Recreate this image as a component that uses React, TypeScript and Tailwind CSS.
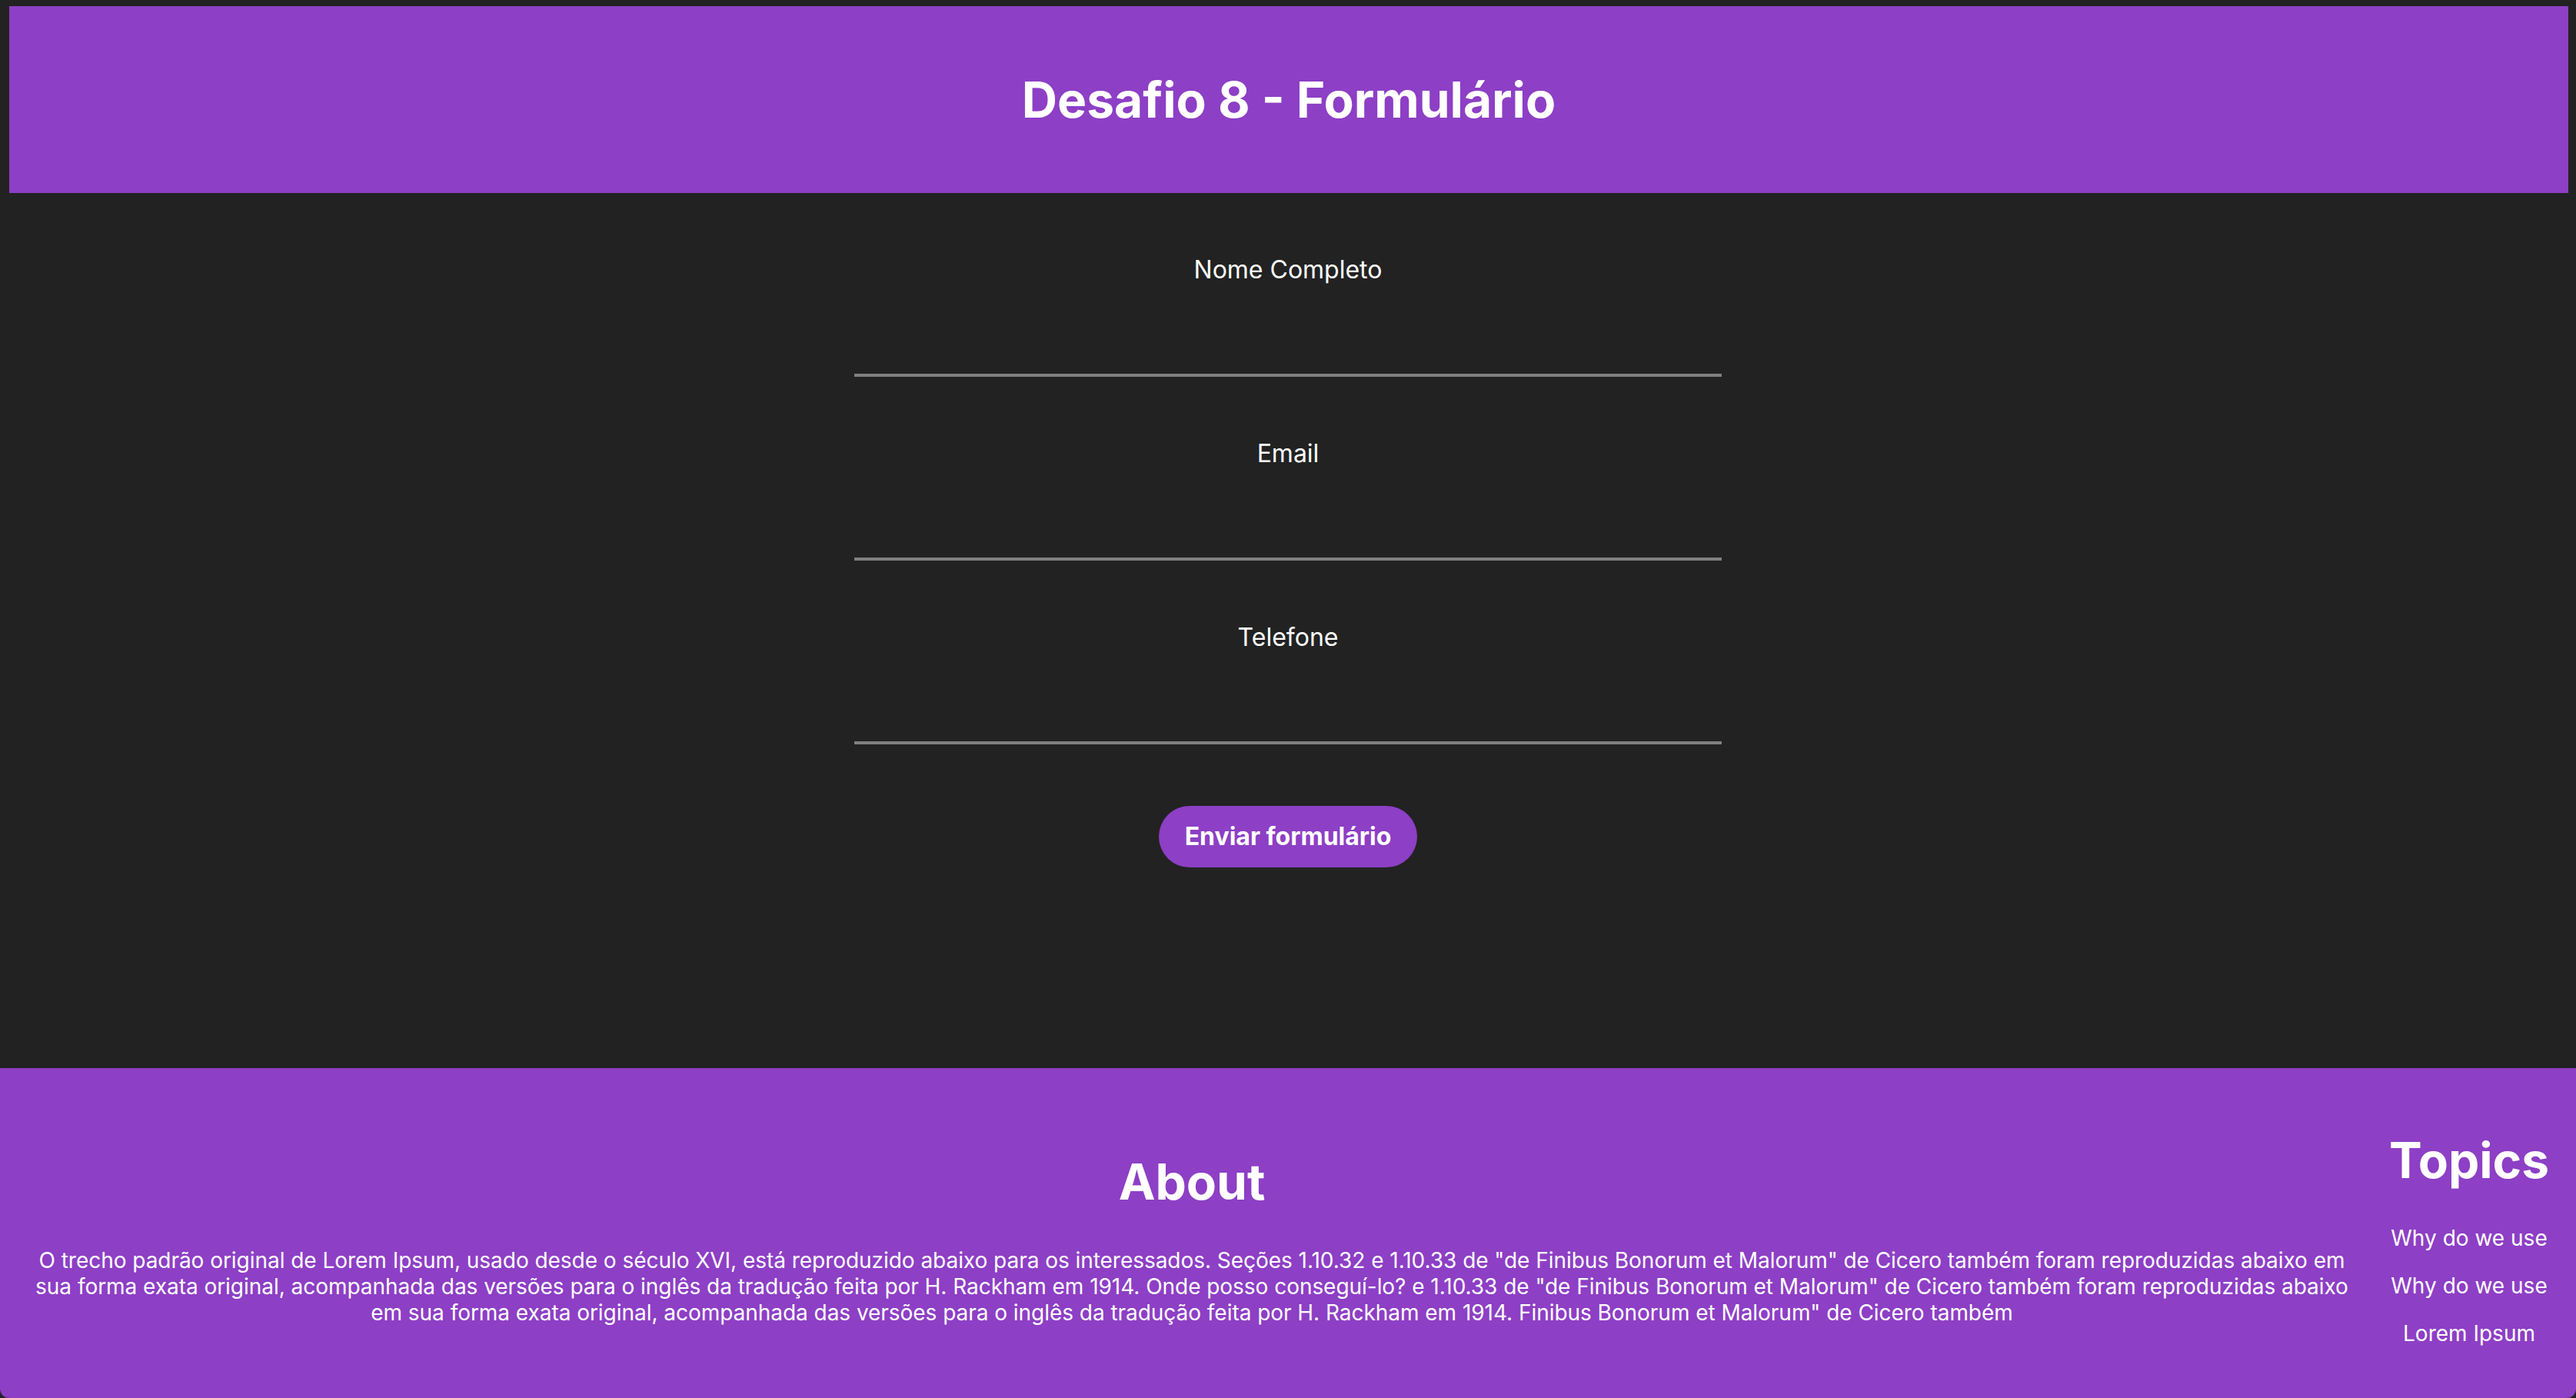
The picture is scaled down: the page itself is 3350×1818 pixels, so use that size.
import React from "react";

const PURPLE = "bg-[#8d3fc5]";

function Field({ label, type }: { label: string; type: string }) {
  return (
    <div className="flex flex-col items-center">
      <label className="text-[32px] leading-[39px] text-white">{label}</label>
      <input
        type={type}
        className="mt-[68px] h-[52px] w-[1128px] border-b-4 border-[#808080] bg-transparent text-[32px] text-white outline-none"
      />
    </div>
  );
}

export default function App() {
  const about =
    'O trecho padrão original de Lorem Ipsum, usado desde o século XVI, está reproduzido abaixo para os interessados. Seções 1.10.32 e 1.10.33 de "de Finibus Bonorum et Malorum" de Cicero também foram reproduzidas abaixo em sua forma exata original, acompanhada das versões para o inglês da tradução feita por H. Rackham em 1914. Onde posso conseguí-lo? e 1.10.33 de "de Finibus Bonorum et Malorum" de Cicero também foram reproduzidas abaixo em sua forma exata original, acompanhada das versões para o inglês da tradução feita por H. Rackham em 1914. Finibus Bonorum et Malorum" de Cicero também';

  return (
    <div
      className="flex h-[1818px] w-full flex-col bg-[#222222] text-white"
      style={{ fontFamily: "Inter, 'Noto Sans', sans-serif" }}
    >
      <header
        className={`${PURPLE} ml-[12px] mr-[10px] mt-[8px] flex h-[243px] items-center justify-center`}
      >
        <h1 className="text-[64px] font-bold leading-none">Desafio 8 - Formulário</h1>
      </header>

      <main className="flex flex-1 flex-col items-center pt-[80px]">
        <form className="flex flex-col items-center gap-[80px]" onSubmit={(e) => e.preventDefault()}>
          <Field label="Nome Completo" type="text" />
          <Field label="Email" type="email" />
          <Field label="Telefone" type="tel" />
        </form>
        <button
          type="button"
          className={`${PURPLE} mt-[80px] h-[80px] w-[336px] rounded-full text-[32px] font-bold text-white`}
        >
          Enviar formulário
        </button>
      </main>

      <footer
        className={`${PURPLE} flex h-[429px] items-center rounded-b-[12px] pl-[40px] pr-[14px] pt-[14px]`}
      >
        <section className="flex flex-1 flex-col items-center text-center">
          <h2 className="text-[64px] font-bold leading-[77px]">About</h2>
          <p className="mt-[47px] text-[28px] leading-[34px] tracking-[-0.04px]">{about}</p>
        </section>
        <nav className="ml-[26px] flex w-[250px] flex-col items-center text-center">
          <h2 className="text-[64px] font-bold leading-[77px]">Topics</h2>
          <ul className="mt-[46px] flex flex-col items-center gap-[28px] text-[28px] leading-[34px]">
            <li>Why do we use</li>
            <li>Why do we use</li>
            <li>Lorem Ipsum</li>
          </ul>
        </nav>
      </footer>
    </div>
  );
}
